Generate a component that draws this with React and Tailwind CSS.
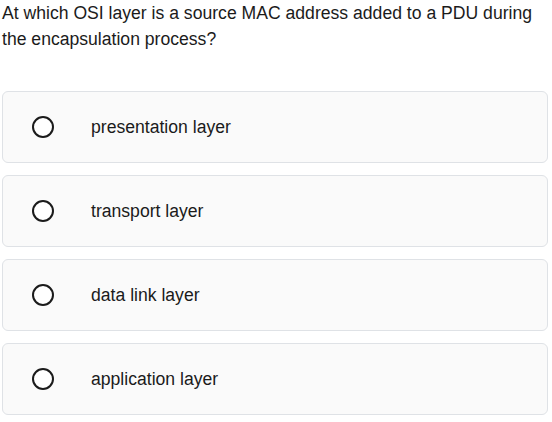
export default function App() {
  const options = ["presentation layer", "transport layer", "data link layer", "application layer"];
  return (
    <div className="w-[552px] h-[422px] bg-white px-[2px] text-[#1b1b1b]" style={{ fontFamily: '"Liberation Sans", Arial, sans-serif' }}>
      <p className="text-[17.6px] leading-[26px]">
        At which OSI layer is a source MAC address added to a PDU during the encapsulation process?
      </p>
      <div className="mt-[39px] flex flex-col gap-[11.7px] w-[546px]">
        {options.map((o) => (
          <div key={o} className="h-[72.3px] rounded-[6px] border border-[#dfe2e6] bg-[#fafafa] flex items-center pl-[29px]">
            <span className="w-[22px] h-[22px] rounded-full border-[2.5px] border-[#1b1b1b] bg-white shrink-0" />
            <span className="ml-[37px] text-[17.6px] leading-[26px]">{o}</span>
          </div>
        ))}
      </div>
    </div>
  );
}
